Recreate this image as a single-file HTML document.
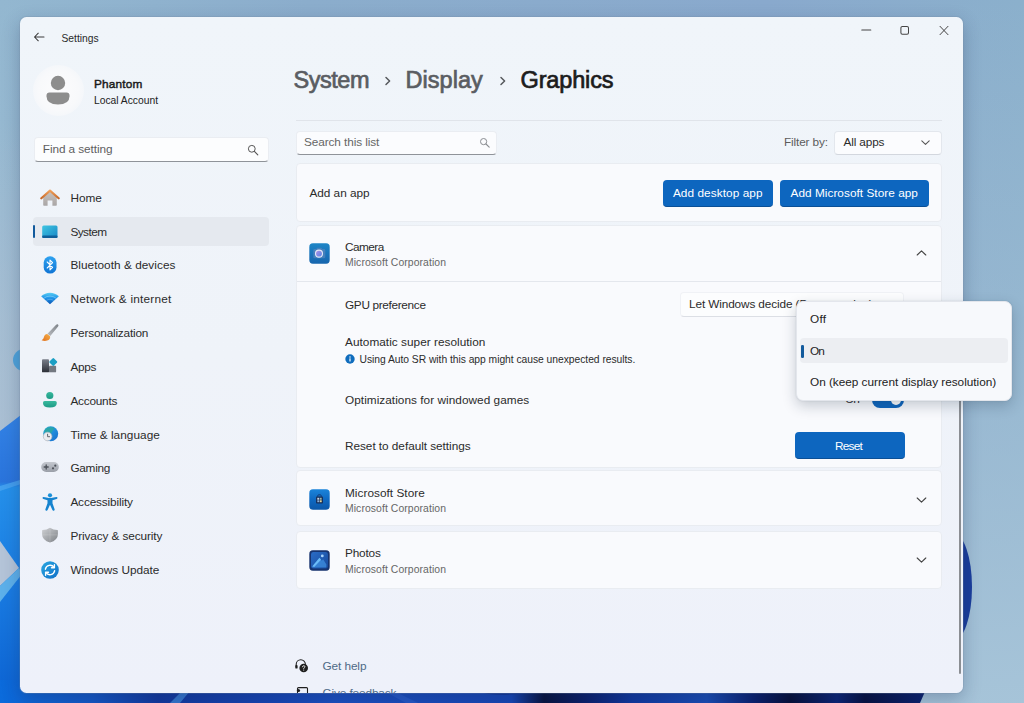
<!DOCTYPE html>
<html>
<head>
<meta charset="utf-8">
<title>Settings</title>
<style>
*{box-sizing:border-box;margin:0;padding:0}
html,body{width:1024px;height:703px;overflow:hidden}
body{font-family:"Liberation Sans",sans-serif;color:#1b1b1b;position:relative;background:#8fb0cc}
.abs{position:absolute}
#desk{position:absolute;left:0;top:0;width:1024px;height:703px}
#win{position:absolute;left:20px;top:17px;width:943px;height:675.5px;border-radius:6.5px;
 background:linear-gradient(180deg,#f0f5fa 0%,#eff3f9 50%,#eef1fa 100%);
 box-shadow:0 0 0 1px rgba(120,140,165,.25),0 6px 18px rgba(20,40,80,.28);overflow:hidden}
.t{position:absolute;white-space:nowrap;line-height:1}
.nav{font-size:11.8px;color:#2b2b2b;left:70.4px}
.card{position:absolute;left:296px;width:646px;background:#f9fafd;border:1px solid #e9ecf1;border-radius:4px}
.sub{font-size:10.4px;color:#666}
.btn{position:absolute;background:#0d66bf;color:#fff;border-radius:4px;font-size:11.8px;text-align:center;border-bottom:1px solid #0a4f96}
</style>
</head>
<body>
<svg id="desk" viewBox="0 0 1024 703">
 <defs>
  <linearGradient id="bg" x1="0" y1="0" x2="1" y2="0">
   <stop offset="0" stop-color="#93b7d0"/><stop offset=".3" stop-color="#8badcc"/><stop offset=".75" stop-color="#89a9cd"/><stop offset="1" stop-color="#8bb0cc"/>
  </linearGradient>
  <linearGradient id="bgv" x1="0" y1="0" x2="0" y2="1">
   <stop offset="0" stop-color="#a9c4d8" stop-opacity="0"/><stop offset=".45" stop-color="#a9c4d8" stop-opacity=".35"/><stop offset="1" stop-color="#a9c6da" stop-opacity=".9"/>
  </linearGradient>
  <linearGradient id="lp" x1="0" y1="0" x2="0" y2="1"><stop offset="0" stop-color="#aebfd2" stop-opacity="0"/><stop offset=".6" stop-color="#aebfd2" stop-opacity=".5"/><stop offset="1" stop-color="#b0c0d3" stop-opacity=".7"/></linearGradient>
  <linearGradient id="lb" x1="0" y1="0" x2="0" y2="1">
   <stop offset="0" stop-color="#3484e6"/><stop offset=".25" stop-color="#2a74dc"/><stop offset=".27" stop-color="#2590ea"/><stop offset=".6" stop-color="#1a7ce2"/><stop offset="1" stop-color="#0c62d2"/>
  </linearGradient>
  <linearGradient id="bs" x1="0" y1="0" x2="1" y2="0">
   <stop offset="0" stop-color="#0b6bdc"/><stop offset=".1" stop-color="#1457c6"/><stop offset=".17" stop-color="#12389e"/><stop offset=".3" stop-color="#1746b6"/><stop offset=".36" stop-color="#1b50c2"/><stop offset=".55" stop-color="#1746b6"/><stop offset=".585" stop-color="#07123e"/><stop offset=".63" stop-color="#0b1f6c"/><stop offset=".68" stop-color="#1038a0"/><stop offset=".76" stop-color="#1a4db6"/><stop offset=".81" stop-color="#0a2070"/><stop offset=".85" stop-color="#050e38"/><stop offset=".9" stop-color="#0b2476"/><stop offset=".93" stop-color="#061040"/><stop offset="1" stop-color="#0b2272"/>
  </linearGradient>
 </defs>
 <rect width="1024" height="703" fill="url(#bg)"/>
 <rect width="1024" height="703" fill="url(#bgv)"/>
 <!-- left strip: pale region fading -->
 <rect x="0" y="120" width="30" height="330" fill="url(#lp)"/>
 <circle cx="24" cy="360" r="11" fill="#4fa3da"/>
 <!-- left bloom -->
 <path d="M0 431L30 408V703H0z" fill="url(#lb)"/>
 <path d="M0 486l30-9v4L0 491z" fill="#4aa4f0" opacity=".8"/>
 <path d="M0 541l19 27L0 586z" fill="#b4c4d8"/>
 <path d="M0 586l19-18 3 6L0 602z" fill="#5db0ea"/>
 <!-- right bloom peeking -->
 <ellipse cx="953" cy="587" rx="19" ry="54" fill="#1a3d9c"/>
 <!-- bottom strip -->
 <path d="M0 680H930l-10 23H0z" fill="url(#bs)"/>
 <path d="M170 703l12-12h8l-10 12z" fill="#3f86da" opacity=".8"/>
 <path d="M406 703l-22-12h10l24 12z" fill="#2a5ccc" opacity=".7"/>
 <path d="M480 692q20 6 50 0v-3h-50z" fill="#0f2f8c" opacity=".6"/>
</svg>

<div id="win">
 <div id="o" style="position:absolute;left:-20px;top:-17px;width:1024px;height:703px">
 <!-- title bar -->
 <svg class="abs" style="left:32.2px;top:31.2px" width="14" height="12" viewBox="0 0 14 12"><path d="M12 6H2.5M6.3 2.2L2.5 6l3.8 3.8" fill="none" stroke="#3a3a3a" stroke-width="1.05" stroke-linecap="round" stroke-linejoin="round"/></svg>
 <div class="t" style="left:61.5px;top:34.1px;font-size:10.3px;color:#2a2a2a;letter-spacing:-0.02px">Settings</div>
 <!-- caption buttons -->
 <svg class="abs" style="left:858px;top:24px" width="100" height="14" viewBox="0 0 100 14">
  <path d="M3.8 5.9h9" stroke="#454545" stroke-width="1.05" fill="none" stroke-linecap="round"/>
  <rect x="42.9" y="2.4" width="7.6" height="7.8" rx="1.5" fill="none" stroke="#454545" stroke-width="1.05"/>
  <path d="M82 2.3l8 8.4M90 2.3l-8 8.4" stroke="#454545" stroke-width="1" fill="none" stroke-linecap="round"/>
 </svg>
 <!-- SIDEBAR -->
 <div class="abs" style="left:33px;top:65px;width:51px;height:51px;border-radius:50%;background:radial-gradient(circle,#fcfcfd 0%,#f8f9fb 55%,#f3f6fa 80%,rgba(240,244,249,0) 100%)"></div>
 <svg class="abs" style="left:44px;top:74px" width="28" height="32" viewBox="0 0 28 32"><circle cx="14" cy="9" r="7.2" fill="#8d8d8d"/><path d="M2.5 21.5q0-3 3-3h17q3 0 3 3v.8q0 8.2-11.5 8.2T2.5 22.3z" fill="#8d8d8d"/></svg>
 <div class="t" style="left:94px;top:78.5px;font-size:11.8px;font-weight:400;-webkit-text-stroke:.45px #1a1a1a;color:#1a1a1a;letter-spacing:0.18px">Phantom</div>
 <div class="t" style="left:94px;top:95.5px;font-size:10.3px;color:#222;letter-spacing:-0.01px">Local Account</div>
 <div class="abs" style="left:33.5px;top:137.3px;width:235px;height:25.2px;background:#fcfdfe;border:1px solid #eaedf2;border-bottom:1.5px solid #8f9399;border-radius:4px"></div>
 <div class="t" style="left:42.8px;top:143.5px;font-size:11.8px;color:#5e5e5e;letter-spacing:-0.09px">Find a setting</div>
 <svg class="abs" style="left:247px;top:144px" width="12" height="12" viewBox="0 0 12 12"><circle cx="4.8" cy="4.8" r="3.4" fill="none" stroke="#555" stroke-width="1"/><path d="M7.4 7.4l3.4 3.4" stroke="#555" stroke-width="1.1" stroke-linecap="round"/></svg>
 <!-- selected -->
 <div class="abs" style="left:33px;top:216.5px;width:236px;height:29.5px;border-radius:4px;background:#e5e9ef"></div>
 <div class="abs" style="left:32.5px;top:224.5px;width:2.6px;height:13.5px;border-radius:1.3px;background:#125a9c"></div>
 <div class="t nav" style="top:192.5px;letter-spacing:-0.02px">Home</div>
 <div class="t nav" style="top:226.5px;letter-spacing:-0.53px">System</div>
 <div class="t nav" style="top:259.5px;letter-spacing:0.04px">Bluetooth &amp; devices</div>
 <div class="t nav" style="top:293.5px;letter-spacing:0.23px">Network &amp; internet</div>
 <div class="t nav" style="top:327.5px;letter-spacing:-0.19px">Personalization</div>
 <div class="t nav" style="top:361.5px;letter-spacing:-0.30px">Apps</div>
 <div class="t nav" style="top:395.5px;letter-spacing:-0.22px">Accounts</div>
 <div class="t nav" style="top:429.5px;letter-spacing:0.05px">Time &amp; language</div>
 <div class="t nav" style="top:462.5px;letter-spacing:-0.26px">Gaming</div>
 <div class="t nav" style="top:496.5px;letter-spacing:-0.14px">Accessibility</div>
 <div class="t nav" style="top:530.5px;letter-spacing:-0.10px">Privacy &amp; security</div>
 <div class="t nav" style="top:564.5px;letter-spacing:-0.01px">Windows Update</div>
 <!-- NAVTEXT -->
 <svg class="abs" style="left:40px;top:188px" width="20" height="20" viewBox="0 0 20 20"><defs><linearGradient id="hr" x1="0" y1="0" x2="0" y2="1"><stop offset="0" stop-color="#f0a05a"/><stop offset="1" stop-color="#c76a2c"/></linearGradient><linearGradient id="hw" x1="0" y1="0" x2="0" y2="1"><stop offset="0" stop-color="#c9c2bc"/><stop offset="1" stop-color="#a9a6a6"/></linearGradient></defs>
<path d="M3.2 9.2L10 3.6l6.8 5.6V17q0 .8-.8.8h-3.6v-5.2H7.6v5.2H4q-.8 0-.8-.8z" fill="url(#hw)"/><path d="M1.3 10.3L10 2.6l8.7 7.7" fill="none" stroke="url(#hr)" stroke-width="2.2" stroke-linecap="round" stroke-linejoin="round"/></svg>
 <svg class="abs" style="left:40px;top:221.5px" width="20" height="20" viewBox="0 0 20 20"><defs><linearGradient id="sy" x1="0" y1="0" x2="1" y2="1"><stop offset="0" stop-color="#40c6e2"/><stop offset="1" stop-color="#1787c6"/></linearGradient></defs><rect x="2.2" y="3.5" width="15.3" height="12.4" rx="1.5" fill="url(#sy)"/><rect x="2.2" y="13.5" width="15.3" height="2.4" rx="1" fill="#0f5f9a"/></svg>
 <svg class="abs" style="left:40px;top:255px" width="20" height="20" viewBox="0 0 20 20"><defs><linearGradient id="bt" x1="0" y1="0" x2="0" y2="1"><stop offset="0" stop-color="#2ea2f0"/><stop offset="1" stop-color="#0f74d4"/></linearGradient></defs>
<rect x="3.7" y="1.3" width="12.8" height="17.2" rx="6.3" fill="url(#bt)"/><path d="M7.2 7l5.4 5.3L10 14.9V5.1l2.6 2.6L7.2 13" fill="none" stroke="#fff" stroke-width="1.1" stroke-linejoin="round" stroke-linecap="round"/></svg>
 <svg class="abs" style="left:40px;top:289px" width="20" height="20" viewBox="0 0 20 20"><defs><linearGradient id="nw" x1="0" y1="0" x2="0" y2="1"><stop offset="0" stop-color="#58cdf3"/><stop offset=".45" stop-color="#2196ea"/><stop offset="1" stop-color="#0a55b4"/></linearGradient></defs><path d="M10 15.2L1.1 7.3Q5 3.8 10 3.8t8.9 3.5z" fill="url(#nw)"/><path d="M3.8 9.3Q6.5 7.1 10 7.1t6.2 2.2" fill="none" stroke="#a8e2fb" stroke-width=".8" opacity=".6"/><path d="M6.3 11.5Q7.9 10.3 10 10.3t3.7 1.2" fill="none" stroke="#7cc8f7" stroke-width=".8" opacity=".55"/></svg>
 <svg class="abs" style="left:40px;top:323px" width="20" height="20" viewBox="0 0 20 20"><defs><linearGradient id="pb" x1="1" y1="0" x2="0" y2="1"><stop offset="0" stop-color="#7d8288"/><stop offset="1" stop-color="#b9bcc0"/></linearGradient><linearGradient id="pt" x1="1" y1="0" x2="0" y2="1"><stop offset="0" stop-color="#f6b14a"/><stop offset="1" stop-color="#e0701e"/></linearGradient></defs>
<path d="M17.8 1.3q1.3.7.3 2.1L10.3 13l-2.8-2.3 8.4-8.7q1-1.1 1.9-.7z" fill="url(#pb)"/><path d="M7.2 10.9l2.9 2.4q.5 3.3-2.9 4.3-2.8.8-5.6-.4 1.9-.9 2.3-3 .5-3 3.3-3.3z" fill="url(#pt)"/></svg>
 <svg class="abs" style="left:40px;top:357px" width="20" height="20" viewBox="0 0 20 20"><defs><linearGradient id="ap" x1="0" y1="0" x2="0" y2="1"><stop offset="0" stop-color="#7a7f8a"/><stop offset="1" stop-color="#2b2e36"/></linearGradient></defs><rect x="2" y="2.3" width="7" height="13" rx=".9" fill="url(#ap)"/><rect x="9" y="8.8" width="7.1" height="6.5" rx=".9" fill="#80858e"/><rect x="9" y="8.8" width="7.1" height="6.5" rx=".9" fill="#2b2e36" opacity=".15"/><rect x="10.2" y="1.9" width="6.2" height="6.2" rx="1.1" transform="rotate(45 13.3 5)" fill="#1b9fc4"/></svg>
 <svg class="abs" style="left:40px;top:390.5px" width="20" height="20" viewBox="0 0 20 20"><defs><linearGradient id="ac" x1="0" y1="0" x2="0" y2="1"><stop offset="0" stop-color="#38b99d"/><stop offset="1" stop-color="#1d9a86"/></linearGradient></defs><circle cx="9.8" cy="4.5" r="3.6" fill="url(#ac)"/><path d="M3 11.7q0-1.6 1.6-1.6h10.6q1.6 0 1.6 1.6v.3q0 4.6-6.9 4.6T3 12z" fill="url(#ac)"/></svg>
 <svg class="abs" style="left:40px;top:424.5px" width="20" height="20" viewBox="0 0 20 20"><defs><linearGradient id="tl" x1="0" y1="0" x2="1" y2="1"><stop offset="0" stop-color="#2fb0c4"/><stop offset=".5" stop-color="#1f8fdc"/><stop offset="1" stop-color="#1769cc"/></linearGradient></defs><circle cx="10.7" cy="8.7" r="7.5" fill="url(#tl)"/><path d="M5.5 4q4.5-3.3 9.5-.3-2.8 1.3-3.2 3.5t-3.8 1.6q-2.6-.4-3.6-2.2z" fill="#2ba79f" opacity=".8"/><circle cx="7.6" cy="11.5" r="4.3" fill="#e9ebef" stroke="#b3b8bf" stroke-width=".7"/><path d="M7.6 9.2v2.5h2" fill="none" stroke="#5b6068" stroke-width=".95" stroke-linecap="round" stroke-linejoin="round"/></svg>
 <svg class="abs" style="left:40px;top:456.9px" width="20" height="20" viewBox="0 0 20 20"><defs><linearGradient id="gm" x1="0" y1="0" x2="0" y2="1"><stop offset="0" stop-color="#c4c8cf"/><stop offset="1" stop-color="#9a9fa8"/></linearGradient></defs>
<rect x="1.2" y="5" width="17.6" height="10" rx="5" fill="url(#gm)"/><path d="M6.2 8v4M4.2 10h4" stroke="#4d525a" stroke-width="1.3" stroke-linecap="round"/><circle cx="13" cy="11.3" r="1.1" fill="#4d525a"/><circle cx="15.3" cy="8.7" r="1.1" fill="#4d525a"/></svg>
 <svg class="abs" style="left:40px;top:492px" width="20" height="20" viewBox="0 0 20 20"><circle cx="10" cy="3.3" r="2.1" fill="#1a90d8"/><path d="M2.6 6.2q-.3-1.2.9-1.3l4.3.9q2.2.4 4.4 0l4.3-.9q1.2.1.9 1.3-.2.6-.8.8l-4.1 1.3v3l2.1 5.9q.3 1.1-.7 1.5-1 .3-1.5-.7L10 12.7 7.6 18q-.5 1-1.5.7-1-.4-.7-1.5l2.1-5.9v-3L3.4 7q-.6-.2-.8-.8z" fill="#1583cf"/></svg>
 <svg class="abs" style="left:40px;top:526px" width="20" height="20" viewBox="0 0 20 20"><defs><linearGradient id="pv" x1="0" y1="0" x2="1" y2="1"><stop offset="0" stop-color="#cfd1d4"/><stop offset="1" stop-color="#7d8186"/></linearGradient></defs><path d="M10 1.8q3.3 2.1 7.4 2.3.5 0 .5.6v3.7q0 5.4-7.9 8.2-7.9-2.8-7.9-8.2V4.7q0-.6.5-.6Q6.7 3.9 10 1.8z" fill="url(#pv)"/><path d="M10 1.8v14.8M2.1 8.9h15.8" stroke="#fff" stroke-width=".5" opacity=".3"/></svg>
 <svg class="abs" style="left:40px;top:559.5px" width="20" height="20" viewBox="0 0 20 20"><defs><linearGradient id="wu" x1="0" y1="0" x2="1" y2="1"><stop offset="0" stop-color="#2aa7e0"/><stop offset="1" stop-color="#0f6fc8"/></linearGradient></defs>
<circle cx="10" cy="10" r="8.8" fill="url(#wu)"/><path d="M5.4 9.2A4.8 4.8 0 0 1 14 7.3M14.6 10.8A4.8 4.8 0 0 1 6 12.7" fill="none" stroke="#fff" stroke-width="1.4" stroke-linecap="round"/><path d="M14.4 4.8v2.9h-2.9M5.6 15.2v-2.9h2.9" fill="none" stroke="#fff" stroke-width="1.4" stroke-linecap="round" stroke-linejoin="round"/></svg>
 <!-- NAVICONS -->
 <!-- breadcrumb -->
 <div class="t" style="left:293.5px;top:69px;font-size:23.5px;font-weight:400;-webkit-text-stroke:.7px #5a5d62;color:#5a5d62;letter-spacing:-0.47px">System</div>
 <svg class="abs" style="left:383px;top:74px" width="10" height="14" viewBox="0 0 10 14"><path d="M3 3.5l3.6 3.5L3 10.5" fill="none" stroke="#55585c" stroke-width="1.5" stroke-linecap="round" stroke-linejoin="round"/></svg>
 <div class="t" style="left:405.5px;top:69px;font-size:23.5px;font-weight:400;-webkit-text-stroke:.7px #5a5d62;color:#5a5d62;letter-spacing:0.04px">Display</div>
 <svg class="abs" style="left:498px;top:74px" width="10" height="14" viewBox="0 0 10 14"><path d="M3 3.5l3.6 3.5L3 10.5" fill="none" stroke="#55585c" stroke-width="1.5" stroke-linecap="round" stroke-linejoin="round"/></svg>
 <div class="t" style="left:520.5px;top:69px;font-size:23.5px;font-weight:400;-webkit-text-stroke:.7px #1c1c1c;color:#1c1c1c;letter-spacing:-0.15px">Graphics</div>
 <div class="abs" style="left:296px;top:120px;width:646px;height:1px;background:#e0e4ea"></div>
 <!-- search this list -->
 <div class="abs" style="left:296px;top:130.5px;width:200.5px;height:24.5px;background:#fbfcfe;border:1px solid #eaedf2;border-bottom:1.5px solid #8f9399;border-radius:4px"></div>
 <div class="t" style="left:304px;top:136.5px;font-size:11.8px;color:#666;letter-spacing:-0.09px">Search this list</div>
 <svg class="abs" style="left:479px;top:137px" width="12" height="12" viewBox="0 0 12 12"><circle cx="4.6" cy="4.6" r="3.1" fill="none" stroke="#8a8d92" stroke-width="1"/><path d="M7 7l3.2 3.2" stroke="#8a8d92" stroke-width="1.1" stroke-linecap="round"/></svg>
 <div class="t" style="left:784px;top:137px;font-size:11.8px;color:#5c5c5c;letter-spacing:-0.14px">Filter by:</div>
 <div class="abs" style="left:834px;top:130.5px;width:108px;height:24.5px;background:#fbfcfe;border:1px solid #e3e7ed;border-bottom-color:#d3d7de;border-radius:4px"></div>
 <div class="t" style="left:843.5px;top:137px;font-size:11.8px;color:#2b2b2b;letter-spacing:-0.14px">All apps</div>
 <svg class="abs" style="left:920px;top:138px" width="11" height="9" viewBox="0 0 11 9"><path d="M1.8 2.8l3.7 3.6 3.7-3.6" fill="none" stroke="#555" stroke-width="1.05" stroke-linecap="round" stroke-linejoin="round"/></svg>
 <!-- Add an app card -->
 <div class="card" style="left:296px;top:163px;height:58.5px"></div>
 <div class="t" style="left:309.5px;top:187.8px;font-size:11.8px;color:#2b2b2b;letter-spacing:-0.04px">Add an app</div>
 <div class="btn" style="left:662.5px;top:179.5px;width:110.5px;height:27px;line-height:26px;letter-spacing:0.08px">Add desktop app</div>
 <div class="btn" style="left:780px;top:179.5px;width:148.5px;height:27px;line-height:26px;letter-spacing:0.04px">Add Microsoft Store app</div>
 <!-- Camera card -->
 <div class="card" style="left:296px;top:224.5px;height:243px"></div>
 <div class="abs" style="left:297px;top:281px;width:644px;height:1px;background:#e4e7ed"></div>
 <svg class="abs" style="left:309px;top:243px" width="21" height="21" viewBox="0 0 21 21"><defs><linearGradient id="cm" x1="0" y1="0" x2="0" y2="1"><stop offset="0" stop-color="#1f86c6"/><stop offset=".5" stop-color="#1a74bb"/><stop offset="1" stop-color="#1766ae"/></linearGradient><linearGradient id="cl" x1="0" y1="0" x2="1" y2="1"><stop offset="0" stop-color="#b58fe6"/><stop offset="1" stop-color="#4f86e4"/></linearGradient></defs><rect x=".3" y=".3" width="20.4" height="20.4" rx="3.6" fill="url(#cm)"/><path d="M4.3 7.3q0-1.3 1.3-1.3h1.7l.9-1.2h4.2l.9 1.2h1.7q1.3 0 1.3 1.3v6.6q0 1.3-1.3 1.3H5.6q-1.3 0-1.3-1.3z" fill="#4c82bd" opacity=".85"/><circle cx="10" cy="10.6" r="3.5" fill="url(#cl)" stroke="#e3e8f6" stroke-width="1.1"/></svg>
 <div class="t" style="left:345px;top:242.1px;font-size:11.8px;color:#2b2b2b;letter-spacing:-0.55px">Camera</div>
 <div class="t sub" style="left:345px;top:258.2px;letter-spacing:0.08px">Microsoft Corporation</div>
 <svg class="abs" style="left:915px;top:248px" width="13" height="10" viewBox="0 0 13 10"><path d="M2.2 7l4.3-4.2L10.8 7" fill="none" stroke="#444" stroke-width="1.1" stroke-linecap="round" stroke-linejoin="round"/></svg>
 <div class="t" style="left:345px;top:299.5px;font-size:11.8px;color:#2b2b2b;letter-spacing:-0.33px">GPU preference</div>
 <div class="abs" style="left:680px;top:292px;width:224px;height:25px;background:#fcfdfe;border:1px solid #f0f2f6;border-bottom-color:#dcdfe5;border-radius:4px"></div>
 <div class="t" style="left:689px;top:298.8px;font-size:11.8px;color:#2b2b2b;letter-spacing:-.12px">Let Windows decide (Power saving)</div>
 <div class="t" style="left:345px;top:336.5px;font-size:11.8px;color:#2b2b2b;letter-spacing:0.03px">Automatic super resolution</div>
 <svg class="abs" style="left:344.5px;top:354px" width="10" height="10" viewBox="0 0 10 10"><circle cx="5" cy="5" r="4.7" fill="#0f6cbd"/><circle cx="5" cy="2.9" r=".75" fill="#fff"/><rect x="4.4" y="4.2" width="1.2" height="3.4" rx=".5" fill="#fff"/></svg>
 <div class="t" style="left:359.5px;top:354.8px;font-size:10.3px;color:#2b2b2b;letter-spacing:-0.03px">Using Auto SR with this app might cause unexpected results.</div>
 <div class="t" style="left:345px;top:394.5px;font-size:11.8px;color:#2b2b2b;letter-spacing:0.04px">Optimizations for windowed games</div>
 <div class="t" style="left:845px;top:394px;font-size:11.8px;color:#2b2b2b;letter-spacing:-0.95px">On</div>
 <div class="abs" style="left:872px;top:392px;width:32px;height:16px;border-radius:8px;background:#0f66bd"></div>
 <div class="abs" style="left:891px;top:395px;width:10px;height:10px;border-radius:5px;background:#fff"></div>
 <div class="t" style="left:345px;top:440.8px;font-size:11.8px;color:#2b2b2b;letter-spacing:-0.04px">Reset to default settings</div>
 <div class="btn" style="left:795px;top:432px;width:110px;height:27px;line-height:28px;padding-right:3px;letter-spacing:-0.76px">Reset</div>

 <!-- Store card -->
 <div class="card" style="left:296px;top:470px;height:56.3px"></div>
 <!-- Photos card -->
 <div class="card" style="left:296px;top:531.3px;height:57.3px"></div>
 <svg class="abs" style="left:309px;top:489px" width="21" height="21" viewBox="0 0 21 21"><defs><linearGradient id="st" x1="0" y1="0" x2="0" y2="1"><stop offset="0" stop-color="#1b84da"/><stop offset=".5" stop-color="#0f69c2"/><stop offset="1" stop-color="#0c57a8"/></linearGradient></defs><rect x=".3" y=".3" width="20.4" height="20.4" rx="3.6" fill="url(#st)"/><path d="M8.7 7.8v-.9q0-1.1 1.1-1.1h1.4q1.1 0 1.1 1.1v.9" fill="none" stroke="#143a73" stroke-width=".9"/><rect x="7" y="7.6" width="7" height="6.8" rx=".9" fill="#17305c"/><rect x="8.3" y="8.8" width="1.9" height="1.9" fill="#c9d6e6"/><rect x="10.8" y="8.8" width="1.9" height="1.9" fill="#9fb6a6"/><rect x="8.3" y="11.3" width="1.9" height="1.9" fill="#8fb1d9"/><rect x="10.8" y="11.3" width="1.9" height="1.9" fill="#e8d99a"/></svg>
 <div class="t" style="left:345px;top:488.3px;font-size:11.8px;color:#2b2b2b;letter-spacing:0.03px">Microsoft Store</div>
 <div class="t sub" style="left:345px;top:504.2px;letter-spacing:0.08px">Microsoft Corporation</div>
 <svg class="abs" style="left:915px;top:495px" width="13" height="10" viewBox="0 0 13 10"><path d="M2.2 3l4.3 4.2L10.8 3" fill="none" stroke="#444" stroke-width="1.1" stroke-linecap="round" stroke-linejoin="round"/></svg>
 <svg class="abs" style="left:309px;top:549.6px" width="21" height="21" viewBox="0 0 21 21"><defs><linearGradient id="ph" x1="0" y1="0" x2="1" y2="1"><stop offset="0" stop-color="#2a6cc6"/><stop offset="1" stop-color="#184a9c"/></linearGradient></defs><rect x=".3" y=".3" width="20.4" height="20.4" rx="3.6" fill="#17336e"/><rect x="2" y="2" width="17" height="16.6" rx="2.3" fill="url(#ph)"/><path d="M3.2 16.4l7.3-8.6 2.3 2.9 1.3-1.4 3.3 5.3v1.8q0 1.2-1.2 1.2H4.4q-1.2 0-1.2-1.2z" fill="#3f8fe0" opacity=".75"/><path d="M3.4 16.2l7.1-8.4 1.5 1.9-6.8 7.3z" fill="#6cbcf8"/><circle cx="13.3" cy="5.9" r="1.4" fill="#a9d4fb"/></svg>
 <div class="t" style="left:345px;top:548.3px;font-size:11.8px;color:#2b2b2b;letter-spacing:-0.17px">Photos</div>
 <div class="t sub" style="left:345px;top:565.2px;letter-spacing:0.08px">Microsoft Corporation</div>
 <svg class="abs" style="left:915px;top:555.3px" width="13" height="10" viewBox="0 0 13 10"><path d="M2.2 3l4.3 4.2L10.8 3" fill="none" stroke="#444" stroke-width="1.1" stroke-linecap="round" stroke-linejoin="round"/></svg>

 <svg class="abs" style="left:294px;top:658px" width="16" height="16" viewBox="0 0 16 16"><path d="M2.2 8.8V6.3a4.6 4.6 0 0 1 9.2 0" fill="none" stroke="#1f1f1f" stroke-width="1.1" stroke-linecap="round"/><rect x="1.3" y="7" width="2.3" height="3.6" rx=".9" fill="#1f1f1f"/><circle cx="9.7" cy="10" r="4.3" fill="#1f1f1f"/><path d="M8.5 8.8q.1-1.1 1.2-1.1 1.2 0 1.2 1 0 .6-.7 1-.5.3-.5.9" fill="none" stroke="#fff" stroke-width=".85" stroke-linecap="round"/><circle cx="9.7" cy="12" r=".55" fill="#fff"/></svg>
 <div class="t" style="left:322.5px;top:661px;font-size:11.8px;color:#4f6a86;letter-spacing:-0.09px">Get help</div>
 <svg class="abs" style="left:294px;top:686px" width="16" height="16" viewBox="0 0 16 16"><rect x="3.5" y="1.6" width="10" height="8" rx="1" fill="none" stroke="#1f1f1f" stroke-width="1.1"/><circle cx="4.5" cy="4.5" r="1.6" fill="#1f1f1f"/></svg>
 <div class="t" style="left:322.5px;top:688px;font-size:11.8px;color:#4f6a86;letter-spacing:-0.12px">Give feedback</div>
 <!-- scrollbar -->
 <div class="abs" style="left:959.3px;top:385px;width:1.7px;height:289px;border-radius:1px;background:#8b8e93"></div>

 <!-- CONTENT -->
 </div>
</div>
<!-- dropdown popup -->
<div class="abs" style="left:796px;top:301px;width:216px;height:100px;border-radius:7px;background:#f7f9fc;border:1px solid #e3e6ec;box-shadow:0 5px 14px rgba(20,35,60,.22),0 0 2px rgba(20,35,60,.12)"></div>
<div class="abs" style="left:800px;top:338px;width:208px;height:25px;border-radius:4px;background:#eceef2"></div>
<div class="abs" style="left:801px;top:345px;width:2.6px;height:12.5px;border-radius:1.3px;background:#125a9c"></div>
<div class="t" style="left:810px;top:314.2px;font-size:11.8px;color:#222;letter-spacing:0.23px">Off</div>
<div class="t" style="left:810px;top:345.5px;font-size:11.8px;color:#222;letter-spacing:-0.95px">On</div>
<div class="t" style="left:810px;top:376.7px;font-size:11.8px;color:#222;letter-spacing:-0.02px">On (keep current display resolution)</div>
</body>
</html>
